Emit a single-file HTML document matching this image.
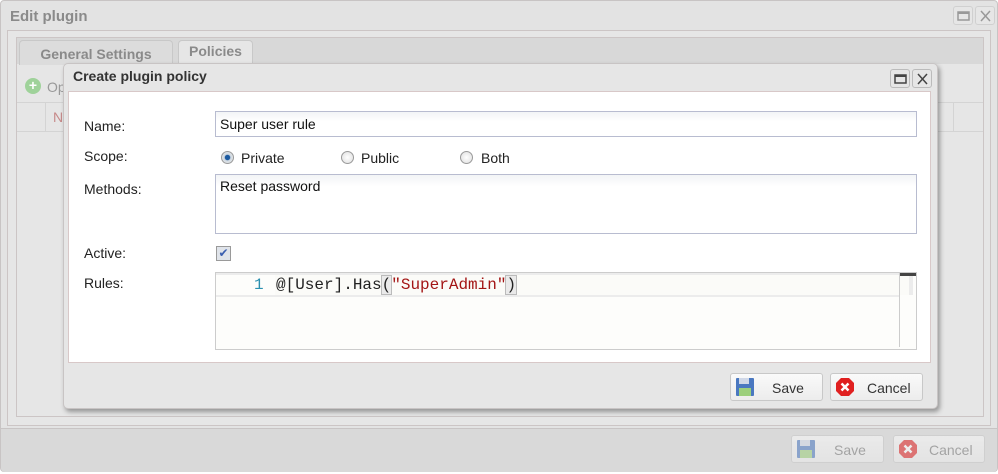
<!DOCTYPE html>
<html><head><meta charset="utf-8"><style>
*{box-sizing:border-box;margin:0;padding:0}
body{width:998px;height:474px;overflow:hidden;background:#fff;font-family:"Liberation Sans","DejaVu Sans",sans-serif;font-size:14px;position:relative}
.abs{position:absolute}
.win{left:0;top:0;width:998px;height:472px;background:#e3e3e3;border:1px solid #c8c4c4;border-radius:4px}
.t1{left:10px;top:8px;font-weight:bold;color:#8a8a8a;font-size:15px}
.tb{width:20px;height:19px;border:1px solid #d0d0d0;border-radius:3px;background:#e6e6e6}
.tb svg{position:absolute;left:3px;top:3px}
.btn{height:28px;border:1px solid #c8c8c8;border-radius:3px;background:linear-gradient(#fafafa,#ececec);color:#333;font-size:14px}
.btn .lbl{position:absolute;top:6px}
.lab{left:84px;color:#222;font-size:14px}
.inp{border:1px solid #b8bcd0;background:#fff}
.radio{width:13px;height:13px;border-radius:50%;border:1px solid #9a9a9a;background:radial-gradient(#fff,#ddd)}
</style></head><body>
<div class="abs win"></div>
<div class="abs t1">Edit plugin</div>
<div class="abs tb" style="left:953px;top:6px"><svg width="13" height="12"><rect x="1" y="2" width="11" height="8" fill="none" stroke="#999" stroke-width="1.5"/><line x1="1" y1="3" x2="12" y2="3" stroke="#999" stroke-width="2"/></svg></div>
<div class="abs tb" style="left:975px;top:6px"><svg width="13" height="12"><path d="M2 1L11 11M11 1L2 11" stroke="#999" stroke-width="1.5"/></svg></div>
<!-- inner panel -->
<div class="abs" style="left:7px;top:30px;width:984px;height:396px;border:1px solid #ccc5c5;background:#e6e6e6"></div>
<div class="abs" style="left:16px;top:37px;width:968px;height:380px;border:1px solid #ccc5c5;background:#e6e6e6"></div>
<div class="abs" style="left:17px;top:38px;width:966px;height:26px;background:#d8d8d8"></div>
<div class="abs" style="left:19px;top:40px;width:154px;height:25px;border:1px solid #c8c8c8;border-bottom:none;border-radius:4px 4px 0 0;background:#dcdcdc;color:#8a8a8a;font-weight:bold;text-align:center;line-height:26px">General Settings</div>
<div class="abs" style="left:178px;top:40px;width:75px;height:25px;border:1px solid #c8c8c8;border-bottom:none;border-radius:4px 4px 0 0;background:#e6e6e6;color:#8a8a8a;font-weight:bold;text-align:center;line-height:20px">Policies</div>
<div class="abs" style="left:17px;top:69px;width:966px;height:34px;border-bottom:1px solid #d4d4d4"></div>
<div class="abs" style="left:25px;top:78px;width:16px;height:16px;border-radius:50%;background:#9fd29a;color:#fff;font-weight:bold;text-align:center;line-height:15px;font-size:14px">+</div>
<div class="abs" style="left:47px;top:79px;color:#999">Op</div>
<div class="abs" style="left:17px;top:103px;width:966px;height:29px;border-bottom:1px solid #d4d4d4"></div>
<div class="abs" style="left:45px;top:103px;width:1px;height:29px;background:#d4d4d4"></div>
<div class="abs" style="left:953px;top:103px;width:1px;height:29px;background:#d4d4d4"></div>
<div class="abs" style="left:53px;top:109px;color:#c78a8a">N</div>
<!-- bottom bar -->
<div class="abs" style="left:1px;top:428px;width:996px;height:44px;background:#d9d9d9;border-top:1px solid #c8c4c4;border-radius:0 0 4px 4px"></div>
<div class="abs btn" style="left:791px;top:435px;width:93px;opacity:.55">
 <svg class="abs" style="left:5px;top:4px" width="18" height="18"><rect x="0" y="0" width="18" height="18" rx="1" fill="#4a78c0"/><rect x="3" y="0" width="10" height="6" fill="#d0d8e8"/><rect x="3" y="10" width="12" height="8" fill="#9ccf7c"/></svg>
 <span class="lbl" style="left:42px;color:#777">Save</span></div>
<div class="abs btn" style="left:893px;top:435px;width:92px;opacity:.55">
 <svg class="abs" style="left:5px;top:4px" width="18" height="18"><polygon points="5,0 13,0 18,5 18,13 13,18 5,18 0,13 0,5" fill="#e02020"/><path d="M5.5 5.5L12.5 12.5M12.5 5.5L5.5 12.5" stroke="#fff" stroke-width="2.5"/></svg>
 <span class="lbl" style="left:35px;color:#777">Cancel</span></div>

<!-- dialog -->
<div class="abs" style="left:63px;top:63px;width:875px;height:346px;background:#e6e6e6;border:1px solid #c8c4c4;border-radius:5px;box-shadow:2px 3px 5px rgba(0,0,0,.35)"></div>
<div class="abs" style="left:73px;top:68px;font-weight:bold;color:#333;font-size:14px">Create plugin policy</div>
<div class="abs tb" style="left:890px;top:69px;border-color:#bbb"><svg width="13" height="12"><rect x="1" y="2" width="11" height="8" fill="none" stroke="#444" stroke-width="1.5"/><line x1="1" y1="3" x2="12" y2="3" stroke="#444" stroke-width="2"/></svg></div>
<div class="abs tb" style="left:912px;top:69px;border-color:#bbb"><svg width="13" height="12"><path d="M2 1L11 11M11 1L2 11" stroke="#444" stroke-width="1.5"/></svg></div>
<div class="abs" style="left:68px;top:91px;width:863px;height:272px;background:#fff;border:1px solid #d8c8c8"></div>

<div class="abs lab" style="top:118px">Name:</div>
<div class="abs inp" style="left:215px;top:111px;width:702px;height:26px;background:linear-gradient(#f2f4f6,#fff 40%)"></div>
<div class="abs" style="left:220px;top:116px;color:#111">Super user rule</div>

<div class="abs lab" style="top:148px">Scope:</div>
<div class="abs radio" style="left:221px;top:151px;background:radial-gradient(#1c5aa0 30%,#cfd8e0 40%,#eee)"></div>
<div class="abs" style="left:241px;top:150px;color:#222">Private</div>
<div class="abs radio" style="left:341px;top:151px"></div>
<div class="abs" style="left:361px;top:150px;color:#222">Public</div>
<div class="abs radio" style="left:460px;top:151px"></div>
<div class="abs" style="left:481px;top:150px;color:#222">Both</div>

<div class="abs lab" style="top:181px">Methods:</div>
<div class="abs inp" style="left:215px;top:174px;width:702px;height:60px;background:linear-gradient(#f2f4f6,#fff 20%)"></div>
<div class="abs" style="left:220px;top:178px;color:#111">Reset password</div>

<div class="abs lab" style="top:245px">Active:</div>
<div class="abs" style="left:216px;top:246px;width:15px;height:15px;border:1px solid #9a9a9a;background:#e0e4ea;color:#3a5fb0;font-size:12px;line-height:13px;text-align:center">✔</div>

<div class="abs lab" style="top:275px">Rules:</div>
<div class="abs" style="left:215px;top:272px;width:702px;height:78px;border:1px solid #ccc;background:#fdfdfb"></div>
<div class="abs" style="left:216px;top:273px;width:684px;height:2px;background:#ececec"></div>
<div class="abs" style="left:275px;top:275px;width:638px;height:20px;background:#fbfbf8;border-right:4px solid #ececec"></div>
<div class="abs" style="left:216px;top:295px;width:684px;height:2px;background:#ececec"></div>
<div class="abs" style="left:899px;top:273px;width:1px;height:74px;background:#ccc"></div>
<div class="abs" style="left:900px;top:273px;width:16px;height:3px;background:#444"></div>
<div class="abs" style="left:254px;top:276px;font-family:'Liberation Mono',monospace;font-size:16px;color:#2a90b0">1</div>
<div class="abs" style="left:276px;top:276px;font-family:'Liberation Mono',monospace;font-size:16px;color:#222;white-space:pre">@[User].Has<span style="background:#eaeaea;outline:1px solid #bbb">(</span><span style="color:#a31515">"SuperAdmin"</span><span style="background:#eaeaea;outline:1px solid #bbb">)</span></div>

<div class="abs btn" style="left:730px;top:373px;width:93px">
 <svg class="abs" style="left:5px;top:4px" width="18" height="18"><rect x="0" y="0" width="18" height="18" rx="1" fill="#4a78c0"/><rect x="3" y="0" width="10" height="6" fill="#d0d8e8"/><rect x="3" y="10" width="12" height="8" fill="#9ccf7c"/></svg>
 <span class="lbl" style="left:41px">Save</span></div>
<div class="abs btn" style="left:830px;top:373px;width:93px">
 <svg class="abs" style="left:5px;top:4px" width="18" height="18"><polygon points="5,0 13,0 18,5 18,13 13,18 5,18 0,13 0,5" fill="#e02020"/><path d="M5.5 5.5L12.5 12.5M12.5 5.5L5.5 12.5" stroke="#fff" stroke-width="2.5"/></svg>
 <span class="lbl" style="left:36px">Cancel</span></div>
</body></html>
